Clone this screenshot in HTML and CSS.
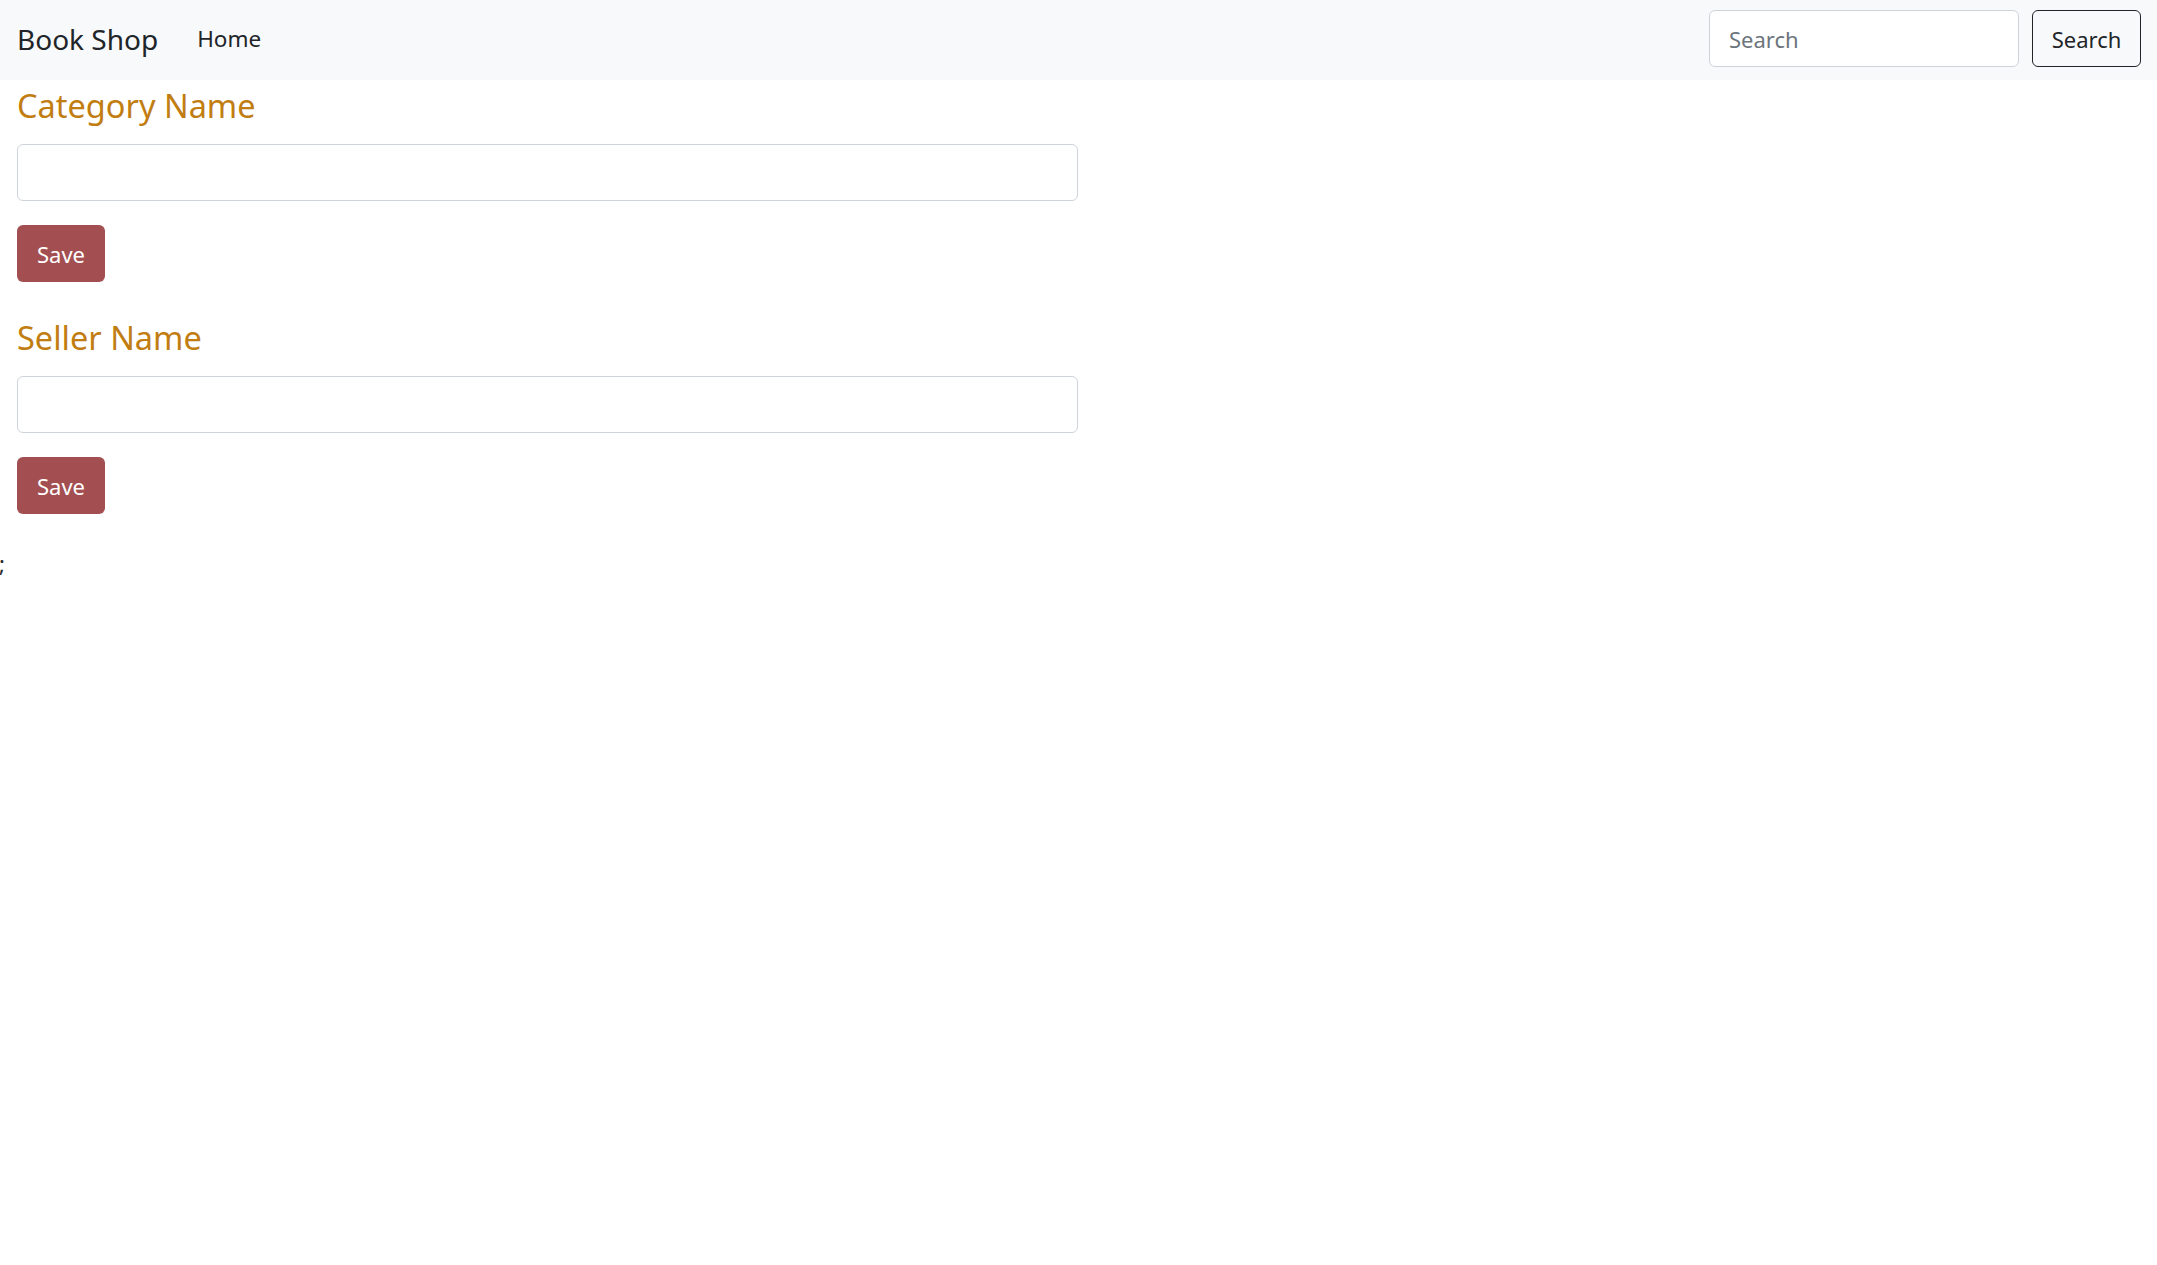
FILE: index.html
```html
<!DOCTYPE html>
<html lang="en">
<head>
<meta charset="utf-8">
<title>Book Shop</title>
<link rel="stylesheet" href="styles.css">
</head>
<body>
<nav class="navbar">
  <a class="brand" href="#">Book Shop</a>
  <a class="nav-link" href="#">Home</a>
  <form class="search">
    <input class="search-input" type="text" placeholder="Search">
    <button class="search-btn" type="button">Search</button>
  </form>
</nav>
<main class="container">
  <form class="entry">
    <h3 class="entry-title">Category Name</h3>
    <input class="field" type="text">
    <button class="save" type="button">Save</button>
  </form>
  <form class="entry">
    <h3 class="entry-title">Seller Name</h3>
    <input class="field" type="text">
    <button class="save" type="button">Save</button>
  </form>
</main>
<div class="stray">;</div>
</body>
</html>
```

FILE: styles.css
```css
* { box-sizing: border-box; }
html, body { margin: 0; padding: 0; background: #fff; }
body {
  font-family: "Noto Sans", "Open Sans", sans-serif;
  color: #212529;
  font-size: 22px;
}
.navbar {
  display: flex;
  align-items: center;
  height: 80px;
  padding: 0 16px 3px 17px;
  background: #f8f9fa;
}
.brand {
  font-size: 28px;
  color: #212529;
  text-decoration: none;
  margin-right: 39px;
}
.nav-link {
  font-size: 22.5px;
  color: #212529;
  text-decoration: none;
}
.search {
  margin-left: auto;
  display: flex;
  gap: 13px;
}
.search-input {
  width: 310px;
  height: 57px;
  border: 1px solid #ced4da;
  border-radius: 6px;
  background: #fff;
  padding: 0 19px;
  font-family: inherit;
  font-size: 22px;
  color: #212529;
}
.search-input::placeholder { color: #6c757d; }
.search-btn {
  width: 109px;
  height: 57px;
  border: 1px solid #212529;
  border-radius: 6px;
  background: transparent;
  font-family: inherit;
  font-size: 22px;
  color: #212529;
  padding: 0;
}
.container {
  padding-left: 17px;
}
.entry {
  width: 1061px;
  display: flex;
  flex-direction: column;
  align-items: flex-start;
}
.entry + .entry { margin-top: 36px; }
.entry:first-child { margin-top: 6px; }
.entry-title {
  margin: 0 0 18px;
  font-size: 32.5px;
  line-height: 40px;
  font-weight: 400;
  color: #c17d11;
}
.field {
  width: 100%;
  height: 57px;
  border: 1px solid #ced4da;
  border-radius: 6px;
  background: #fff;
  font-family: inherit;
  font-size: 22px;
}
.save {
  margin-top: 24px;
  width: 88px;
  height: 57px;
  border: none;
  border-radius: 6px;
  background: #a34f51;
  color: #fff;
  font-family: inherit;
  font-size: 22px;
  padding: 0;
}
.stray {
  margin-top: 33px;
  margin-left: -1px;
  font-size: 22px;
  line-height: 33px;
}
```
